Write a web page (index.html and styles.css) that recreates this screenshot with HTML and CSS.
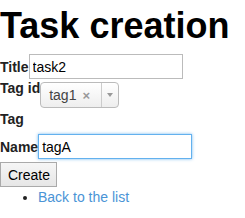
FILE: index.html
```html
<!DOCTYPE html>
<html lang="en">

<head>
    <meta charset="UTF-8">
    <title>Task creation</title>
    <link rel="stylesheet" href="styles.css">
</head>

<body>
    <h1>Task creation</h1>

    <form class="task-form">
        <div class="field">
            <label for="title">Title</label>
            <input type="text" id="title" class="text-input" value="task2">
        </div>
        <div class="field field-top">
            <label>Tag id</label>
            <div class="tag-select">
                <span class="tag-value">tag1</span>
                <span class="tag-clear">&times;</span>
                <span class="tag-arrow"><b></b></span>
            </div>
        </div>
        <div class="group-title">Tag</div>
        <div class="field">
            <label for="tagName">Name</label>
            <input type="text" id="tagName" class="text-input is-focused" value="tagA">
        </div>
        <button type="submit" class="btn-create">Create</button>
    </form>

    <ul class="links">
        <li><a href="#">Back to the list</a></li>
    </ul>
</body>

</html>
```

FILE: styles.css
```css
body {
    font-family: 'Liberation Sans', Arial, sans-serif;
    font-size: 14px;
    color: #222;
    margin: 0;
    background-color: #fff;
}

h1 {
    font-size: 36px;
    font-weight: bold;
    color: #000;
    margin: 5px 0 8px 0;
    line-height: 41px;
}

.task-form {
    margin: 0;
}

.field {
    display: flex;
    align-items: center;
    margin-bottom: 3px;
}

.field label {
    font-weight: bold;
    line-height: 16px;
}

.field-top {
    align-items: flex-start;
}

.field-top label {
    margin-top: -2px;
}

.text-input {
    box-sizing: border-box;
    width: 154px;
    height: 25px;
    margin: 0;
    padding: 0 3px;
    border: 1px solid #bbb;
    border-radius: 0;
    font-family: inherit;
    font-size: 14px;
    color: #000;
    outline: none;
}

.text-input.is-focused {
    border-color: rgba(82, 168, 236, 0.9);
    box-shadow: 0 0 3px rgba(82, 168, 236, 0.8);
}

/* select2 style box */
.tag-select {
    box-sizing: border-box;
    display: flex;
    align-items: stretch;
    width: 79px;
    height: 26px;
    border: 1px solid #bbb;
    border-radius: 4px;
    background: linear-gradient(#fff, #eee);
    color: #444;
}

.tag-value {
    padding-left: 8px;
    line-height: 24px;
    font-size: 14px;
}

.tag-clear {
    margin-left: 6px;
    width: 12px;
    line-height: 25px;
    font-size: 13px;
    font-weight: bold;
    color: #999;
}

.tag-arrow {
    margin-left: auto;
    width: 16px;
    border-left: 1px solid #ccc;
    display: flex;
    align-items: center;
    justify-content: center;
}

.tag-arrow b {
    width: 0;
    height: 0;
    border-left: 3px solid transparent;
    border-right: 3px solid transparent;
    border-top: 4px solid #999;
}

.group-title {
    font-weight: bold;
    line-height: 16px;
    margin: 3px 0 7px 0;
}

.btn-create {
    margin: 0;
    padding: 0 7px;
    height: 25px;
    width: 57px;
    font-family: inherit;
    font-size: 14px;
    color: #000;
    background: linear-gradient(#f6f6f6, #e6e6e6);
    border: 1px solid #aaa;
    border-radius: 0;
}

.links {
    margin: 2px 0 0 0;
    padding-left: 38px;
    line-height: 16px;
}

.links a {
    color: #4a94d6;
    text-decoration: none;
}
```
